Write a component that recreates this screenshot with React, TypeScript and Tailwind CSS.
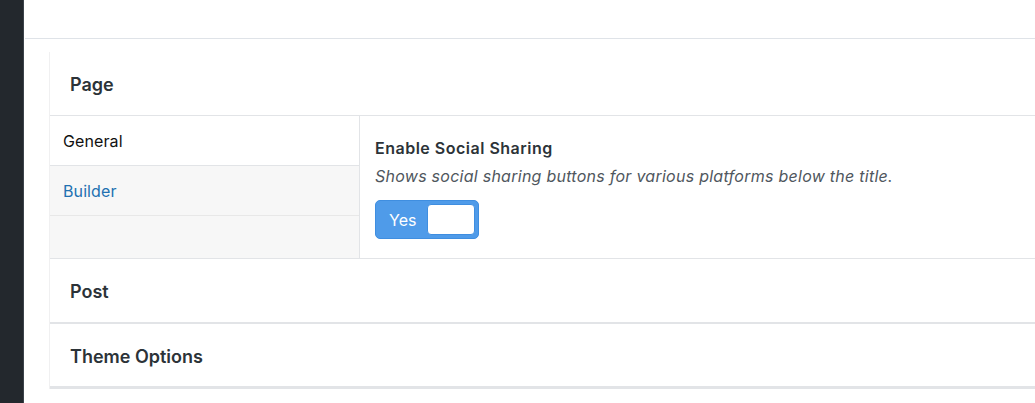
import React from "react";

export default function App() {
  const font = { fontFamily: "Inter, 'Noto Sans', sans-serif" };
  return (
    <div className="flex h-[403px] w-full bg-white overflow-hidden" style={font}>
      <div className="w-[24px] shrink-0 bg-[#23282d] border-r border-[#3c434a]" />
      <div className="flex-1 flex flex-col">
        <div className="h-[39px] shrink-0 border-b border-[#dfe3e8] ml-[1px]" />
        <div className="pl-[25px] pt-[13px]">
          <div className="border-l border-[#f0f0f1]">
            <div className="h-[64px] flex items-center px-[20px] border-b border-[#e2e4e7] text-[18px] font-semibold text-[#2c3338] pt-[2px]">
              Page
            </div>
            <div className="flex h-[143px] border-b border-[#e2e4e7]">
              <div className="w-[310px] shrink-0 bg-[#f7f7f7] border-r border-[#e2e4e7] flex flex-col">
                <div className="h-[50px] bg-white border-b border-[#e2e4e7] flex items-center px-[13px] text-[16px] tracking-[0.1px] text-[#111]">
                  General
                </div>
                <div className="h-[50px] border-b border-[#e8e8e8] flex items-center px-[13px] text-[16px] tracking-[0.1px] text-[#2271b1]">
                  Builder
                </div>
              </div>
              <div className="pl-[15px] pt-[21px]">
                <div className="text-[16px] font-semibold tracking-[0.5px] text-[#2c3338] leading-[22px]">Enable Social Sharing</div>
                <div className="text-[16px] italic tracking-[0.26px] text-[#50575e] leading-[22px] mt-[6px]">
                  Shows social sharing buttons for various platforms below the title.
                </div>
                <div className="mt-[13px] w-[104px] h-[39px] rounded-[5px] bg-[#4f9be9] border border-[#3f8ee0] flex items-center justify-between pl-[13px] pr-[3px]">
                  <span className="text-white text-[16px]">Yes</span>
                  <span className="w-[48px] h-[31px] bg-white rounded-[4px] border border-[#3f8ee0]" />
                </div>
              </div>
            </div>
            <div className="h-[65px] flex items-center px-[20px] border-b-2 border-[#e2e4e7] text-[18px] font-semibold text-[#2c3338] pt-[2px]">
              Post
            </div>
            <div className="h-[65px] flex items-center px-[20px] border-b-[3px] border-[#e2e4e7] text-[18px] font-semibold text-[#2c3338] pt-[2px]">
              Theme Options
            </div>
          </div>
        </div>
      </div>
    </div>
  );
}
